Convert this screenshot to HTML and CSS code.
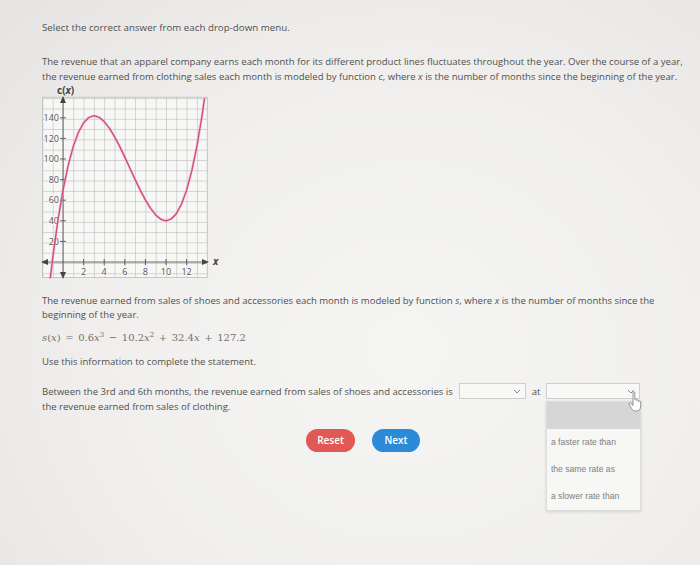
FILE: index.html
```html
<!DOCTYPE html>
<html>
<head>
<meta charset="utf-8">
<link rel="stylesheet" href="styles.css">
</head>
<body>
<div class="page">
  <p class="instr">Select the correct answer from each drop-down menu.</p>
  <div class="intro">
    <p class="line">The revenue that an apparel company earns each month for its different product lines fluctuates throughout the year. Over the course of a year,</p>
    <p class="line">the revenue earned from clothing sales each month is modeled by function <i>c</i>, where <i>x</i> is the number of months since the beginning of the year.</p>
  </div>
  <svg class="graph" width="190" height="197" viewBox="0 0 190 197">
    <defs>
      <pattern id="grid" patternUnits="userSpaceOnUse" x="27" y="179" width="10.3" height="10.3">
        <path d="M0 0.35 H10.3 M0.35 0 V10.3" stroke="#bcbcbc" stroke-width="0.7" fill="none"/>
      </pattern>
      <clipPath id="clip"><rect x="6.4" y="14.2" width="164.8" height="180.3"/></clipPath>
    </defs>
    <text class="axlabel" x="21" y="11">c(<tspan font-style="italic">x</tspan>)</text>
    <g transform="translate(0,1)">
      <rect x="6.4" y="13.2" width="164.8" height="180.3" fill="#f7f7f5"/>
      <rect x="6.4" y="13.2" width="164.8" height="180.3" fill="url(#grid)" stroke="#b5b5b5" stroke-width="0.7"/>
      <g stroke="#555" stroke-width="0.9" fill="none">
        <line x1="9" y1="178" x2="169" y2="178"/>
        <line x1="27" y1="16" x2="27" y2="191"/>
        <path d="M24 33.8 H30 M24 54.4 H30 M24 75 H30 M24 95.6 H30 M24 116.2 H30 M24 136.8 H30 M24 157.4 H30"/>
        <path d="M47.6 175 V181 M68.2 175 V181 M88.8 175 V181 M109.4 175 V181 M130 175 V181 M150.6 175 V181"/>
      </g>
      <g fill="#444">
        <path d="M27 12 L24 19 L30 19 Z"/>
        <path d="M27 195 L24 188 L30 188 Z"/>
        <path d="M5 178 L12 175 L12 181 Z"/>
        <path d="M173 178 L166 175 L166 181 Z"/>
      </g>
      <g class="ticks" text-anchor="end">
        <text x="23" y="37">140</text>
        <text x="23" y="57.6">120</text>
        <text x="23" y="78.2">100</text>
        <text x="23" y="98.8">80</text>
        <text x="23" y="119.4">60</text>
        <text x="23" y="140">40</text>
        <text x="23" y="160.6">20</text>
      </g>
      <g class="ticks" text-anchor="middle">
        <text x="47.6" y="190.5">2</text>
        <text x="68.2" y="190.5">4</text>
        <text x="88.8" y="190.5">6</text>
        <text x="109.4" y="190.5">8</text>
        <text x="130" y="190.5">10</text>
        <text x="150.6" y="190.5">12</text>
      </g>
      <text class="axlabel" x="177" y="181" font-style="italic">x</text>
      <polyline clip-path="url(#clip)" fill="none" stroke="#f2a6c2" stroke-width="2.6" stroke-linejoin="round" opacity="0.6"
        points="12.6,208.5 16.7,173.9 21.85,136.8 27,106.2 32.15,81.6 37.3,62.4 42.45,48.3 47.6,38.8 52.75,33.5 57.9,31.7 63.05,33.3 68.2,37.6 73.35,44.2 78.5,52.6 83.65,62.4 88.8,73.1 93.95,84.3 99.1,95.4 104.25,106.1 109.4,115.9 114.55,124.3 119.7,130.9 124.85,135.3 130,136.8 135.15,135 140.3,129.7 145.45,120.2 150.6,106.1 155.75,86.9 160.9,62.3 166.05,31.7 171.2,-5.3"/>
      <polyline clip-path="url(#clip)" fill="none" stroke="#cf4a78" stroke-width="1.3" stroke-linejoin="round"
        points="12.6,208.5 16.7,173.9 21.85,136.8 27,106.2 32.15,81.6 37.3,62.4 42.45,48.3 47.6,38.8 52.75,33.5 57.9,31.7 63.05,33.3 68.2,37.6 73.35,44.2 78.5,52.6 83.65,62.4 88.8,73.1 93.95,84.3 99.1,95.4 104.25,106.1 109.4,115.9 114.55,124.3 119.7,130.9 124.85,135.3 130,136.8 135.15,135 140.3,129.7 145.45,120.2 150.6,106.1 155.75,86.9 160.9,62.3 166.05,31.7 171.2,-5.3"/>
    </g>
  </svg>
  <div class="para2">
    <p class="line">The revenue earned from sales of shoes and accessories each month is modeled by function <i>s</i>, where <i>x</i> is the number of months since the</p>
    <p class="line">beginning of the year.</p>
  </div>
  <p class="formula"><i>s</i>(<i>x</i>)<span class="op">=</span>0.6<i>x</i><sup>3</sup><span class="op">−</span>10.2<i>x</i><sup>2</sup><span class="op">+</span>32.4<i>x</i><span class="op">+</span>127.2</p>
  <p class="use">Use this information to complete the statement.</p>
  <div class="statement">
    <p class="line">Between the 3rd and 6th months, the revenue earned from sales of shoes and accessories is <span class="select sel1"><svg class="chev" width="8" height="5" viewBox="0 0 8 5"><path d="M1 1 L4 4 L7 1" fill="none" stroke="#888" stroke-width="1"/></svg></span> at <span class="select sel2"><svg class="chev" width="8" height="5" viewBox="0 0 8 5"><path d="M1 1 L4 4 L7 1" fill="none" stroke="#888" stroke-width="1"/></svg><span class="menu"><span class="item blank"></span><span class="item">a faster rate than</span><span class="item">the same rate as</span><span class="item">a slower rate than</span></span><svg class="cursor" width="16" height="21" viewBox="0 0 16 21"><path d="M5 1.5 C5 0.6 6.8 0.6 6.8 1.5 V8.6 C7 7.7 8.7 7.7 8.7 8.6 V9.6 C9 8.7 10.6 8.7 10.6 9.6 V10.6 C11 9.7 12.7 9.7 12.7 10.6 V15 C12.7 18 11.2 20 8.6 20 H7.6 C5.6 20 4.6 19 3.6 17.6 L1.1 13.2 C0.6 12.2 1.8 11.3 2.7 12.2 L5 14.6 Z" fill="#fff" stroke="#8a8a8a" stroke-width="0.9"/></svg></span></p>
    <p class="line">the revenue earned from sales of clothing.</p>
  </div>
  <div class="buttons">
    <span class="btn reset">Reset</span>
    <span class="btn next">Next</span>
  </div>
</div>
</body>
</html>
```
FILE: styles.css
```css
html, body {
  margin: 0;
  padding: 0;
}
body {
  width: 700px;
  height: 565px;
  overflow: hidden;
  background: radial-gradient(ellipse 80% 90% at 58% 62%, #f5f5f3 0%, #f0efed 55%, #e6e4e2 100%);
  font-family: "Open Sans", "Liberation Sans", sans-serif;
  color: #505050;
  font-size: 9.55px;
}
.page {
  padding: 21px 0 0 42px;
}
p {
  margin: 0;
}
.line {
  white-space: nowrap;
}
.instr {
  font-size: 9.75px;
  line-height: 14px;
}
.intro {
  margin-top: 19px;
  line-height: 15px;
}
.graph {
  display: block;
  margin: -1px 0 0 -6px;
}
.axlabel {
  font-family: "Open Sans", sans-serif;
  font-size: 10px;
  font-weight: 700;
  fill: #444;
}
.ticks text {
  font-family: "Open Sans", sans-serif;
  font-size: 9px;
  fill: #555;
  paint-order: stroke;
  stroke: #f7f7f5;
  stroke-width: 2px;
}
.para2 {
  margin-top: 14px;
  line-height: 14px;
}
.formula {
  margin-top: 8px;
  line-height: 16px;
  font-family: "DejaVu Serif", "Liberation Serif", serif;
  font-size: 10px;
  color: #707070;
}
.formula sup {
  font-size: 7px;
  line-height: 0;
}
.formula .op {
  margin: 0 4.6px;
}
.use {
  margin-top: 9px;
  line-height: 14px;
}
.statement {
  margin-top: 15px;
  line-height: 15px;
}
.select {
  position: relative;
  display: inline-block;
  height: 14px;
  vertical-align: middle;
  border: 1px solid #cfcfcf;
  background: #f8f8f7;
  box-sizing: content-box;
  margin-top: -2px;
}
.sel1 {
  width: 65px;
  margin-left: 4px;
  margin-right: 3px;
}
.sel2 {
  width: 92px;
  margin-left: 3px;
}
.chev {
  position: absolute;
  right: 4px;
  top: 5px;
}
.menu {
  position: absolute;
  left: -1px;
  top: 17px;
  width: 93px;
  display: flex;
  flex-direction: column;
  background: #f7f7f6;
  border: 1px solid #dcdcdc;
  box-shadow: 0 1px 3px rgba(0,0,0,0.12);
  z-index: 2;
}
.item {
  display: block;
  height: 27px;
  line-height: 27px;
  padding-left: 4px;
  font-family: "Liberation Sans", Arial, sans-serif;
  font-size: 8.6px;
  color: #808080;
  white-space: nowrap;
}
.item.blank {
  height: 27px;
  background: #d6d6d6;
}
.cursor {
  position: absolute;
  left: 81px;
  top: 7px;
  z-index: 3;
}
.buttons {
  display: flex;
  gap: 17px;
  margin: 15px 0 0 264px;
}
.btn {
  display: inline-block;
  height: 23px;
  line-height: 23px;
  border-radius: 12px;
  color: #fff;
  font-size: 10px;
  font-weight: 600;
  text-align: center;
}
.reset {
  width: 49px;
  background: #e05955;
}
.next {
  width: 48px;
  background: #2b8bd9;
}
```
